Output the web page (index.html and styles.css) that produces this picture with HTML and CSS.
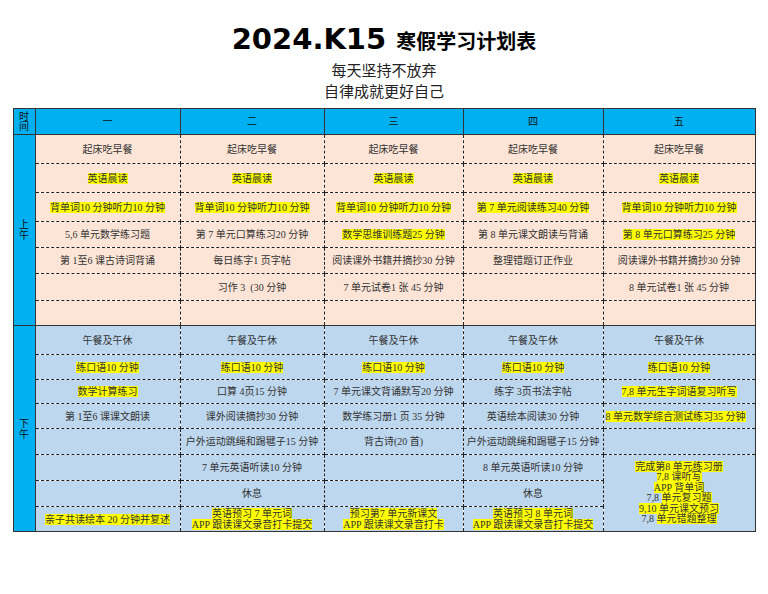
FILE: index.html
```html
<!DOCTYPE html>
<html lang="zh-CN">
<head>
<meta charset="utf-8">
<title>2024.K15 寒假学习计划表</title>
<link rel="stylesheet" href="styles.css">
</head>
<body>
<header class="head">
  <h1 class="title">2024.K15 <span class="title-cn">寒假学习计划表</span></h1>
  <p class="sub">每天坚持不放弃</p>
  <p class="sub">自律成就更好自己</p>
</header>
<table class="plan">
  <colgroup>
    <col class="c-label"><col class="c1"><col class="c2"><col class="c3"><col class="c4"><col class="c5">
  </colgroup>
  <thead>
    <tr class="r26">
      <th class="label-head">时<br>间</th><th>一</th><th>二</th><th>三</th><th>四</th><th>五</th>
    </tr>
  </thead>
  <tbody class="am">
    <tr class="r29">
      <td class="label" rowspan="7">上<br>午</td>
      <td>起床吃早餐</td><td>起床吃早餐</td><td>起床吃早餐</td><td>起床吃早餐</td><td>起床吃早餐</td>
    </tr>
    <tr class="r29">
      <td><span class="hl">英语晨读</span></td><td><span class="hl">英语晨读</span></td><td><span class="hl">英语晨读</span></td><td><span class="hl">英语晨读</span></td><td><span class="hl">英语晨读</span></td>
    </tr>
    <tr class="r29">
      <td><span class="hl">背单词10 分钟听力10 分钟</span></td>
      <td><span class="hl">背单词10 分钟听力10 分钟</span></td>
      <td><span class="hl">背单词10 分钟听力10 分钟</span></td>
      <td><span class="hl">第 7 单元阅读练习40 分钟</span></td>
      <td><span class="hl">背单词10 分钟听力10 分钟</span></td>
    </tr>
    <tr class="r26">
      <td>5,6 单元数学练习题</td>
      <td>第 7 单元口算练习20 分钟</td>
      <td><span class="hl">数学思维训练题25 分钟</span></td>
      <td>第 8 单元课文朗读与背诵</td>
      <td><span class="hl">第 8 单元口算练习25 分钟</span></td>
    </tr>
    <tr class="r26">
      <td>第 1至6 课古诗词背诵</td>
      <td>每日练字1 页字帖</td>
      <td>阅读课外书籍并摘抄30 分钟</td>
      <td>整理错题订正作业</td>
      <td>阅读课外书籍并摘抄30 分钟</td>
    </tr>
    <tr class="r27">
      <td></td>
      <td>习作 3&nbsp; (30 分钟</td>
      <td>7 单元试卷1 张 45 分钟</td>
      <td></td>
      <td>8 单元试卷1 张 45 分钟</td>
    </tr>
    <tr class="r25">
      <td></td><td></td><td></td><td></td><td></td>
    </tr>
  </tbody>
  <tbody class="pm">
    <tr class="r29 first">
      <td class="label" rowspan="8">下<br>午</td>
      <td>午餐及午休</td><td>午餐及午休</td><td>午餐及午休</td><td>午餐及午休</td><td>午餐及午休</td>
    </tr>
    <tr class="r25">
      <td><span class="hl">练口语10 分钟</span></td><td><span class="hl">练口语10 分钟</span></td><td><span class="hl">练口语10 分钟</span></td><td><span class="hl">练口语10 分钟</span></td><td><span class="hl">练口语10 分钟</span></td>
    </tr>
    <tr class="r24">
      <td><span class="hl">数学计算练习</span></td>
      <td>口算 4页15 分钟</td>
      <td>7 单元课文背诵默写20 分钟</td>
      <td>练字 3页书法字帖</td>
      <td><span class="hl">7,8 单元生字词语复习听写</span></td>
    </tr>
    <tr class="r25">
      <td>第 1至6 课课文朗读</td>
      <td>课外阅读摘抄30 分钟</td>
      <td>数学练习册1 页 35 分钟</td>
      <td>英语绘本阅读30 分钟</td>
      <td class="left"><span class="hl">8 单元数学综合测试练习35 分钟</span></td>
    </tr>
    <tr class="r26">
      <td></td>
      <td>户外运动跳绳和踢毽子15 分钟</td>
      <td>背古诗(20 首)</td>
      <td>户外运动跳绳和踢毽子15 分钟</td>
      <td></td>
    </tr>
    <tr class="r26">
      <td></td>
      <td>7 单元英语听读10 分钟</td>
      <td></td>
      <td>8 单元英语听读10 分钟</td>
      <td class="stack" rowspan="3">
        <span class="hl">完成第8 单元练习册</span><br>
        <span class="hl">7,8 课听写</span><br>
        <span class="hl">APP 背单词</span><br>
        7,8 <span class="hl">单元复习题</span><br>
        <span class="hl">9,10 单元课文预习</span><br>
        7,8 <span class="hl">单元错题整理</span>
      </td>
    </tr>
    <tr class="r26">
      <td></td>
      <td>休息</td>
      <td></td>
      <td>休息</td>
    </tr>
    <tr class="r25">
      <td><span class="hl">亲子共读绘本 20 分钟并复述</span></td>
      <td><span class="hl">英语预习 7 单元词</span><br><span class="hl">APP 跟读课文录音打卡提交</span></td>
      <td><span class="hl">预习第7 单元新课文</span><br><span class="hl">APP 跟读课文录音打卡</span></td>
      <td><span class="hl">英语预习 8 单元词</span><br><span class="hl">APP 跟读课文录音打卡提交</span></td>
    </tr>
  </tbody>
</table>
</body>
</html>
```
FILE: styles.css
```css
html, body {
  margin: 0;
  padding: 0;
  background: #ffffff;
}

body {
  font-family: "Liberation Serif", "Noto Sans CJK SC", serif;
  color: #333333;
}

.head {
  text-align: center;
  padding-top: 21px;
}

.title {
  margin: 0;
  font-family: "DejaVu Sans", "Noto Sans CJK SC", sans-serif;
  font-weight: bold;
  font-size: 29px;
  line-height: 36px;
  color: #000000;
}

.title-cn {
  font-family: "Noto Sans CJK SC", sans-serif;
  font-size: 20px;
  font-weight: bold;
}

.sub {
  margin: 0;
  font-family: "Noto Sans CJK SC", sans-serif;
  font-size: 15px;
  line-height: 21px;
  color: #222222;
}

.plan {
  width: 742px;
  margin: 7px auto 0;
  border-collapse: collapse;
  table-layout: fixed;
  border: 1px solid #333333;
  font-size: 10px;
}

.c-label { width: 22px; }
.c1 { width: 145px; }
.c2 { width: 144px; }
.c3 { width: 139px; }
.c4 { width: 140px; }
.c5 { width: 152px; }

.plan th,
.plan td {
  padding: 0 2px;
  text-align: center;
  vertical-align: middle;
  line-height: 11px;
  overflow: hidden;
  white-space: nowrap;
}

.plan thead th {
  background: #00b0f0;
  border: 1px solid #333333;
  font-weight: normal;
  color: #111111;
}

.plan .label-head {
  padding: 0;
  line-height: 10px;
}

.plan td {
  border: 1px dashed #222222;
}

.am td { background: #fce4d6; }
.pm td { background: #bdd7ee; }

.plan td.label {
  background: #00b0f0;
  border: 1px solid #333333;
  padding: 0;
  color: #111111;
  line-height: 11px;
}

.am tr:last-child td {
  border-bottom: 1px solid #333333;
}

.pm tr.first td {
  border-top: 1px solid #333333;
}

.plan td.left {
  text-align: left;
  padding-left: 2px;
}

.plan td.stack {
  line-height: 10.5px;
}

.hl {
  background: #ffff00;
}

.r24 { height: 24px; }
.r25 { height: 25px; }
.r26 { height: 26px; }
.r27 { height: 27px; }
.r29 { height: 29px; }
```
